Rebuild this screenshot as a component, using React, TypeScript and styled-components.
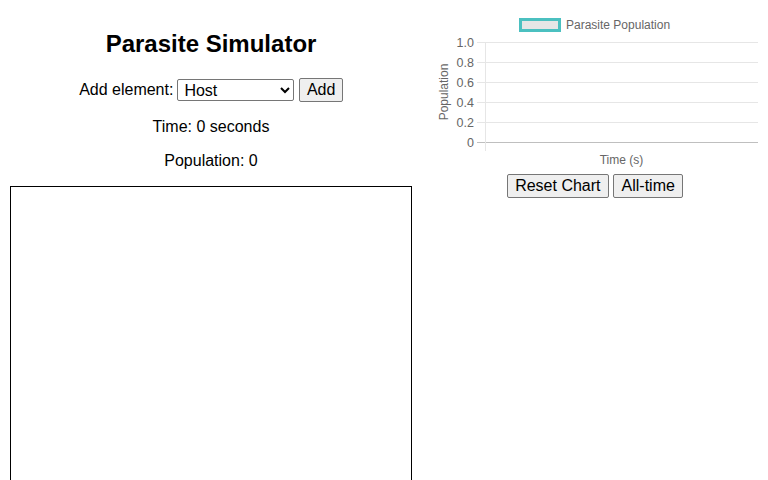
import React from "react";
import styled, { createGlobalStyle } from "styled-components";

const GlobalStyle = createGlobalStyle`
  html, body { margin: 0; padding: 0; background: #fff; }
  body { font-family: "Liberation Sans", Arial, sans-serif; color: #000; }
`;

const Page = styled.div`
  display: flex;
  align-items: flex-start;
  padding-left: 10px;
  height: 480px;
  overflow: hidden;
`;

const LeftColumn = styled.div`
  width: 402px;
  display: flex;
  flex-direction: column;
  align-items: center;
`;

const Title = styled.h1`
  margin: 30px 0 0;
  font-size: 24px;
  line-height: 28px;
  font-weight: bold;
`;

const Controls = styled.div`
  margin-top: 20px;
  height: 24px;
  display: flex;
  align-items: center;
  font-size: 16px;
`;

const Label = styled.span`
  margin-right: 4px;
`;

const Select = styled.select`
  width: 117px;
  height: 22px;
  font-family: "Liberation Sans", Arial, sans-serif;
  font-size: 16px;
  border: 1px solid #767676;
  border-radius: 2px;
  background: #fff;
  color: #000;
  padding: 0 0 0 2px;
`;

const Button = styled.button<{ $gap?: number; $pad?: number }>`
  height: 24px;
  padding: 0 ${(p) => p.$pad ?? 7.5}px;
  margin-left: ${(p) => p.$gap ?? 0}px;
  font-family: "Liberation Sans", Arial, sans-serif;
  font-size: 16px;
  color: #000;
  background: #efefef;
  border: 1px solid #767676;
  border-radius: 2px;
  line-height: 20px;
`;

const Info = styled.p`
  margin: 16px 0 0;
  font-size: 16px;
  line-height: 18px;
`;

const SimCanvas = styled.div`
  margin-top: 16px;
  width: 400px;
  height: 400px;
  border: 1px solid #000;
  flex-shrink: 0;
`;

const RightColumn = styled.div`
  margin-left: 18px;
  margin-top: 10px;
  width: 330px;
  display: flex;
  flex-direction: column;
  align-items: center;
`;

const ChartSvg = styled.svg`
  display: block;
  width: 330px;
  height: 160px;
  font-family: "Liberation Sans", Arial, sans-serif;
`;

const ChartButtons = styled.div`
  margin-top: 4px;
  display: flex;
`;

const gridYs = [32, 52, 72, 92, 112, 132];
const labels = ["1.0", "0.8", "0.6", "0.4", "0.2", "0"];

function PopulationChart() {
  return (
    <ChartSvg viewBox="0 0 330 160">
      <rect x={90.5} y={9.5} width={39} height={11} fill="#e6e6e6" stroke="#4bc0c0" strokeWidth={3} />
      <text x={136} y={19} fontSize={12} fill="#666">Parasite Population</text>
      {gridYs.map((y, i) => (
        <line
          key={y}
          x1={47}
          x2={328}
          y1={y + 0.5}
          y2={y + 0.5}
          stroke={i === gridYs.length - 1 ? "#bfbfbf" : "#e6e6e6"}
          strokeWidth={1}
        />
      ))}
      <line x1={55.5} x2={55.5} y1={32} y2={141} stroke="#e6e6e6" strokeWidth={1} />
      {gridYs.map((y, i) => (
        <text key={labels[i]} x={44} y={y + 4.5} fontSize={12.5} fill="#666" textAnchor="end">
          {labels[i]}
        </text>
      ))}
      <text
        x={0}
        y={0}
        fontSize={12}
        fill="#666"
        textAnchor="middle"
        transform="translate(17.5 82) rotate(-90)"
      >
        Population
      </text>
      <text x={191.5} y={154} fontSize={12} fill="#666" textAnchor="middle">Time (s)</text>
    </ChartSvg>
  );
}

export default function App() {
  return (
    <>
      <GlobalStyle />
      <Page>
        <LeftColumn>
          <Title>Parasite Simulator</Title>
          <Controls>
            <Label>Add element:</Label>
            <Select defaultValue="Host">
              <option>Host</option>
              <option>Parasite</option>
            </Select>
            <Button $gap={5} $pad={6.5}>Add</Button>
          </Controls>
          <Info>Time: 0 seconds</Info>
          <Info>Population: 0</Info>
          <SimCanvas />
        </LeftColumn>
        <RightColumn>
          <PopulationChart />
          <ChartButtons>
            <Button>Reset Chart</Button>
            <Button $gap={4}>All-time</Button>
          </ChartButtons>
        </RightColumn>
      </Page>
    </>
  );
}
